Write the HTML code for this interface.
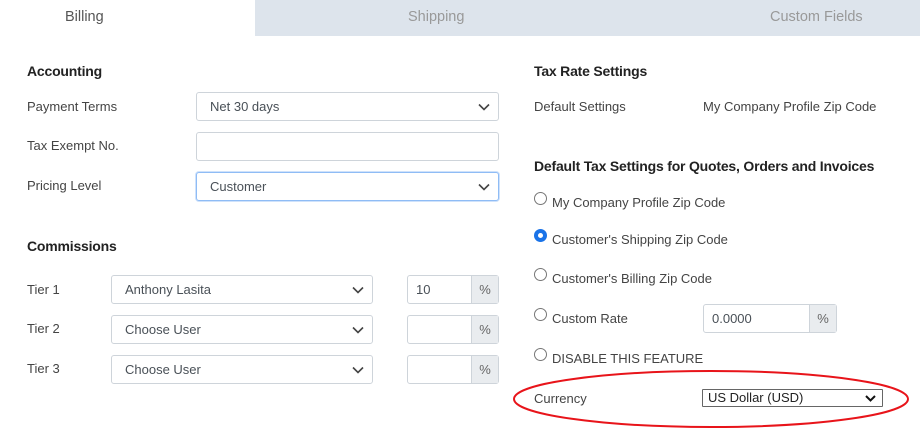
<!DOCTYPE html>
<html><head><style>
*{box-sizing:border-box;margin:0;padding:0}
body{width:920px;height:448px;background:#fff;font-family:"Liberation Sans",sans-serif;color:#333;position:relative;overflow:hidden}
.a{position:absolute;white-space:nowrap}
.tab{position:absolute;top:0;height:36px}
.h{font-size:14px;color:#222;font-weight:bold;letter-spacing:-0.2px}
.l{font-size:13px;color:#444}
.box{position:absolute;border:1px solid #ced4da;border-radius:3px;background:#fff;font-size:13px;color:#495057;padding-left:13px}
.chev{position:absolute;right:8px;top:50%;margin-top:-4px}
.add{position:absolute;right:0;top:0;bottom:0;width:27px;background:#e9ecef;border-left:1px solid #ced4da;text-align:center;color:#666}
.r{position:absolute;width:13px;height:13px;border:1px solid #777;border-radius:50%;background:#fff}
</style></head><body>
<div class="tab" style="left:0;width:255px;background:#fff"></div>
<div class="tab" style="left:255px;width:665px;background:#dde4ec"></div>
<div class="a" style="left:65px;top:9px;font-size:14.5px;color:#555">Billing</div>
<div class="a" style="left:408px;top:9px;font-size:14.5px;color:#999">Shipping</div>
<div class="a" style="left:770px;top:9px;font-size:14.5px;color:#999">Custom Fields</div>

<div class="a h" style="left:27px;top:63px">Accounting</div>
<div class="a l" style="left:27px;top:99px">Payment Terms</div>
<div class="a l" style="left:27px;top:138px">Tax Exempt No.</div>
<div class="a l" style="left:27px;top:178px">Pricing Level</div>

<div class="box" style="left:196px;top:92px;width:303px;height:29px;line-height:27px">Net 30 days<svg class="chev" width="12" height="8" viewBox="0 0 12 8"><path d="M1 1.5l5 5 5-5" fill="none" stroke="#444" stroke-width="1.6"/></svg></div>
<div class="box" style="left:196px;top:132px;width:303px;height:29px"></div>
<div class="box" style="left:196px;top:172px;width:303px;height:29px;line-height:27px;border-color:#8fbcf5;box-shadow:0 0 0 1px #cfe2fb">Customer<svg class="chev" width="12" height="8" viewBox="0 0 12 8"><path d="M1 1.5l5 5 5-5" fill="none" stroke="#444" stroke-width="1.6"/></svg></div>

<div class="a h" style="left:27px;top:238px">Commissions</div>
<div class="a l" style="left:27px;top:282px">Tier 1</div>
<div class="a l" style="left:27px;top:321px">Tier 2</div>
<div class="a l" style="left:27px;top:361px">Tier 3</div>

<div class="box" style="left:111px;top:275px;width:262px;height:29px;line-height:27px">Anthony Lasita<svg class="chev" width="12" height="8" viewBox="0 0 12 8"><path d="M1 1.5l5 5 5-5" fill="none" stroke="#444" stroke-width="1.6"/></svg></div>
<div class="box" style="left:111px;top:315px;width:262px;height:29px;line-height:27px">Choose User<svg class="chev" width="12" height="8" viewBox="0 0 12 8"><path d="M1 1.5l5 5 5-5" fill="none" stroke="#444" stroke-width="1.6"/></svg></div>
<div class="box" style="left:111px;top:355px;width:262px;height:29px;line-height:27px">Choose User<svg class="chev" width="12" height="8" viewBox="0 0 12 8"><path d="M1 1.5l5 5 5-5" fill="none" stroke="#444" stroke-width="1.6"/></svg></div>

<div class="box" style="left:407px;top:275px;width:92px;height:29px;line-height:27px;padding-left:8px">10<div class="add">%</div></div>
<div class="box" style="left:407px;top:315px;width:92px;height:29px;line-height:27px"><div class="add">%</div></div>
<div class="box" style="left:407px;top:355px;width:92px;height:29px;line-height:27px"><div class="add">%</div></div>

<div class="a h" style="left:534px;top:63px">Tax Rate Settings</div>
<div class="a l" style="left:534px;top:99px">Default Settings</div>
<div class="a l" style="left:703px;top:99px">My Company Profile Zip Code</div>
<div class="a h" style="left:534px;top:158px">Default Tax Settings for Quotes, Orders and Invoices</div>

<div class="r" style="left:534px;top:192px"></div>
<div class="a l" style="left:552px;top:195px">My Company Profile Zip Code</div>
<div class="r" style="left:534px;top:229px;border:4px solid #1a73e8"></div>
<div class="a l" style="left:552px;top:232px">Customer's Shipping Zip Code</div>
<div class="r" style="left:534px;top:268px"></div>
<div class="a l" style="left:552px;top:271px">Customer's Billing Zip Code</div>
<div class="r" style="left:534px;top:308px"></div>
<div class="a l" style="left:552px;top:311px">Custom Rate</div>
<div class="box" style="left:703px;top:304px;width:134px;height:29px;line-height:27px;padding-left:8px">0.0000<div class="add">%</div></div>
<div class="r" style="left:534px;top:348px"></div>
<div class="a l" style="left:552px;top:351px">DISABLE THIS FEATURE</div>

<div class="a l" style="left:534px;top:391px">Currency</div>
<div class="box" style="left:702px;top:389px;width:181px;height:18px;line-height:16px;border-color:#666;border-radius:1px;padding-left:5px;color:#222">US Dollar (USD)<svg class="chev" style="right:6px;margin-top:-3px" width="11" height="7" viewBox="0 0 11 7"><path d="M1 1l4.5 4.5L10 1" fill="none" stroke="#111" stroke-width="2"/></svg></div>

<svg class="a" style="left:0;top:0" width="920" height="448"><ellipse cx="711" cy="399" rx="197" ry="28" fill="none" stroke="#e8141a" stroke-width="2"/></svg>
</body></html>
